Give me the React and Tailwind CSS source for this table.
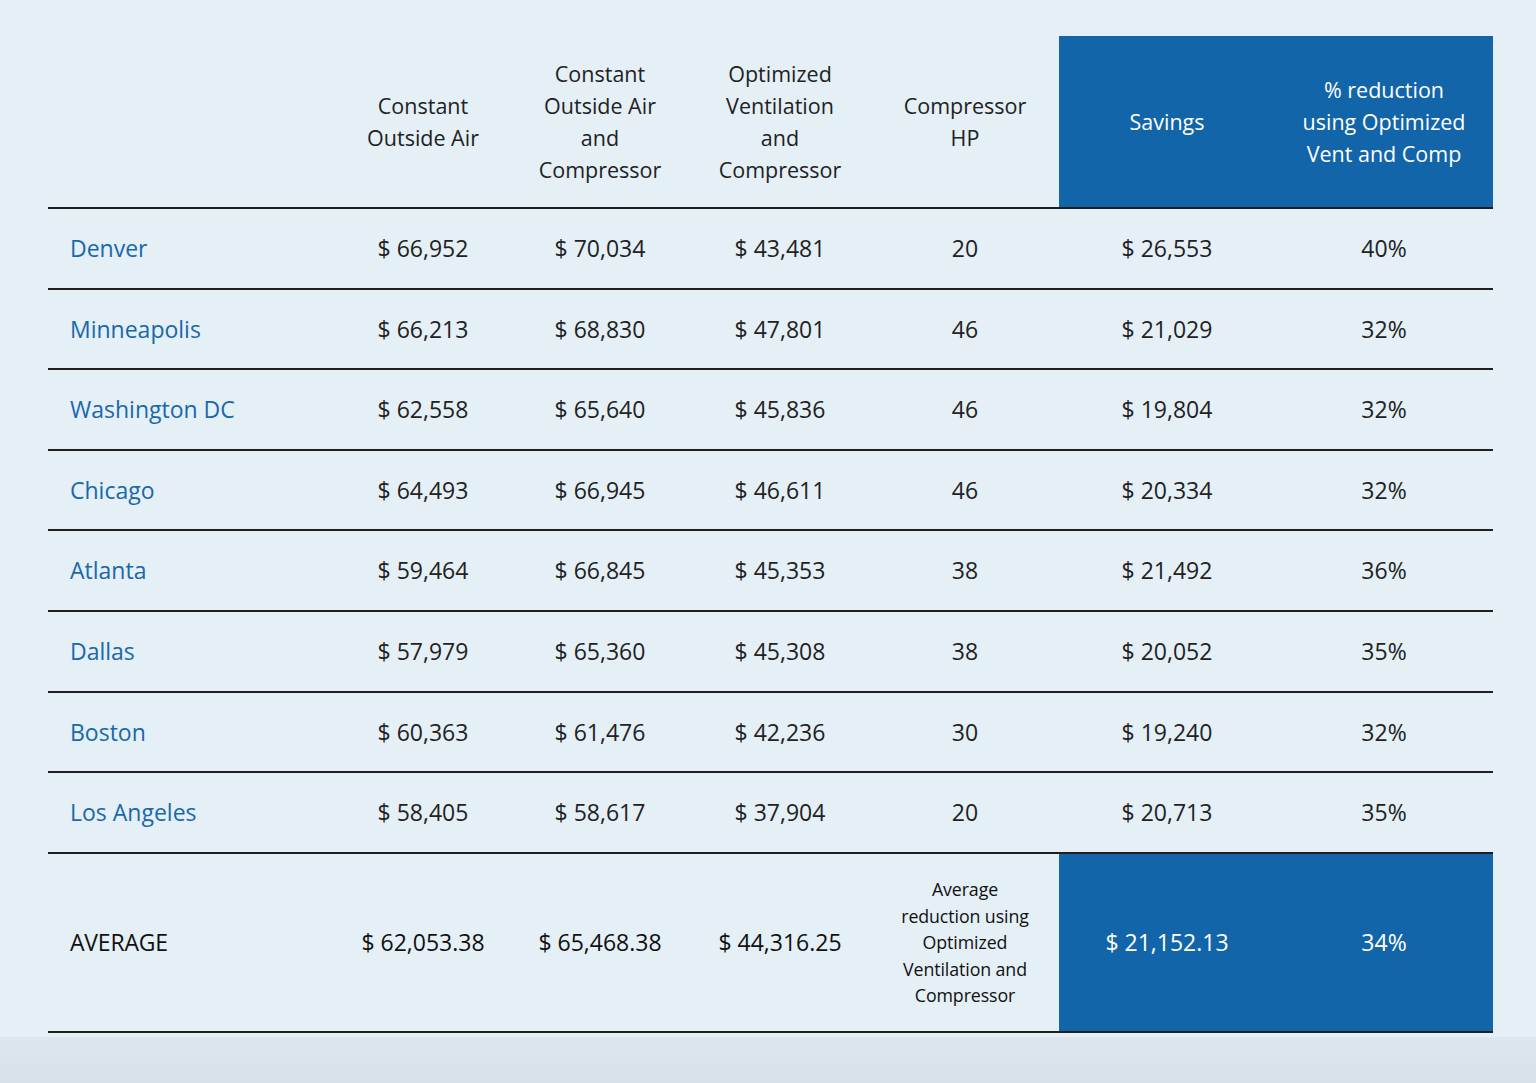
const cols = "grid grid-cols-[287px_176px_178px_182px_188px_216px_218px]";

const rows = [
  ["Denver", "$ 66,952", "$ 70,034", "$ 43,481", "20", "$ 26,553", "40%"],
  ["Minneapolis", "$ 66,213", "$ 68,830", "$ 47,801", "46", "$ 21,029", "32%"],
  ["Washington DC", "$ 62,558", "$ 65,640", "$ 45,836", "46", "$ 19,804", "32%"],
  ["Chicago", "$ 64,493", "$ 66,945", "$ 46,611", "46", "$ 20,334", "32%"],
  ["Atlanta", "$ 59,464", "$ 66,845", "$ 45,353", "38", "$ 21,492", "36%"],
  ["Dallas", "$ 57,979", "$ 65,360", "$ 45,308", "38", "$ 20,052", "35%"],
  ["Boston", "$ 60,363", "$ 61,476", "$ 42,236", "30", "$ 19,240", "32%"],
  ["Los Angeles", "$ 58,405", "$ 58,617", "$ 37,904", "20", "$ 20,713", "35%"],
];

function HeadCell({ lines, blue }) {
  return (
    <div className={`flex flex-col items-center justify-center text-center text-[21.5px] leading-[32px] ${blue ? "bg-[#1265a8] text-white" : "text-[#222]"}`}>
      {lines.map((l) => (
        <span key={l}>{l}</span>
      ))}
    </div>
  );
}

export default function App() {
  return (
    <div className="flex min-h-screen w-full flex-col bg-[#e4eff6] font-medium" style={{ fontFamily: '"Open Sans", "Noto Sans", sans-serif' }}>
      <div className="pl-[48px] pt-[36px]">
        <div className="w-[1445px]">
          {/* header */}
          <div className={`${cols} h-[173px] border-b-2 border-[#1f1f1f]`}>
            <div />
            <HeadCell lines={["Constant", "Outside Air"]} />
            <HeadCell lines={["Constant", "Outside Air", "and", "Compressor"]} />
            <HeadCell lines={["Optimized", "Ventilation", "and", "Compressor"]} />
            <HeadCell lines={["Compressor", "HP"]} />
            <HeadCell lines={["Savings"]} blue />
            <HeadCell lines={["% reduction", "using Optimized", "Vent and Comp"]} blue />
          </div>

          {/* body */}
          {rows.map((r) => (
            <div key={r[0]} className={`${cols} h-[80.6px] items-center border-b-2 border-[#1f1f1f] text-[23px] text-[#222]`}>
              <div className="pl-[22px] text-[#1a68aa]">{r[0]}</div>
              {r.slice(1).map((v, i) => (
                <div key={i} className="text-center">{v}</div>
              ))}
            </div>
          ))}

          {/* average */}
          <div className={`${cols} h-[179px] border-b-2 border-[#1f1f1f] text-[23px] text-[#111]`}>
            <div className="flex items-center pl-[22px] tracking-[-0.2px]">AVERAGE</div>
            <div className="flex items-center justify-center">$ 62,053.38</div>
            <div className="flex items-center justify-center">$ 65,468.38</div>
            <div className="flex items-center justify-center">$ 44,316.25</div>
            <div className="flex flex-col items-center justify-center text-center text-[17.8px] leading-[26.5px] tracking-[-0.1px]">
              <span>Average</span>
              <span>reduction using</span>
              <span>Optimized</span>
              <span>Ventilation and</span>
              <span>Compressor</span>
            </div>
            <div className="flex items-center justify-center bg-[#1265a8] text-white">$ 21,152.13</div>
            <div className="flex items-center justify-center bg-[#1265a8] text-white">34%</div>
          </div>
        </div>
      </div>
      <div className="h-[4px]" />
      <div className="flex-1 bg-gradient-to-b from-[#dde6ee] to-[#d8e1e9]" />
    </div>
  );
}
